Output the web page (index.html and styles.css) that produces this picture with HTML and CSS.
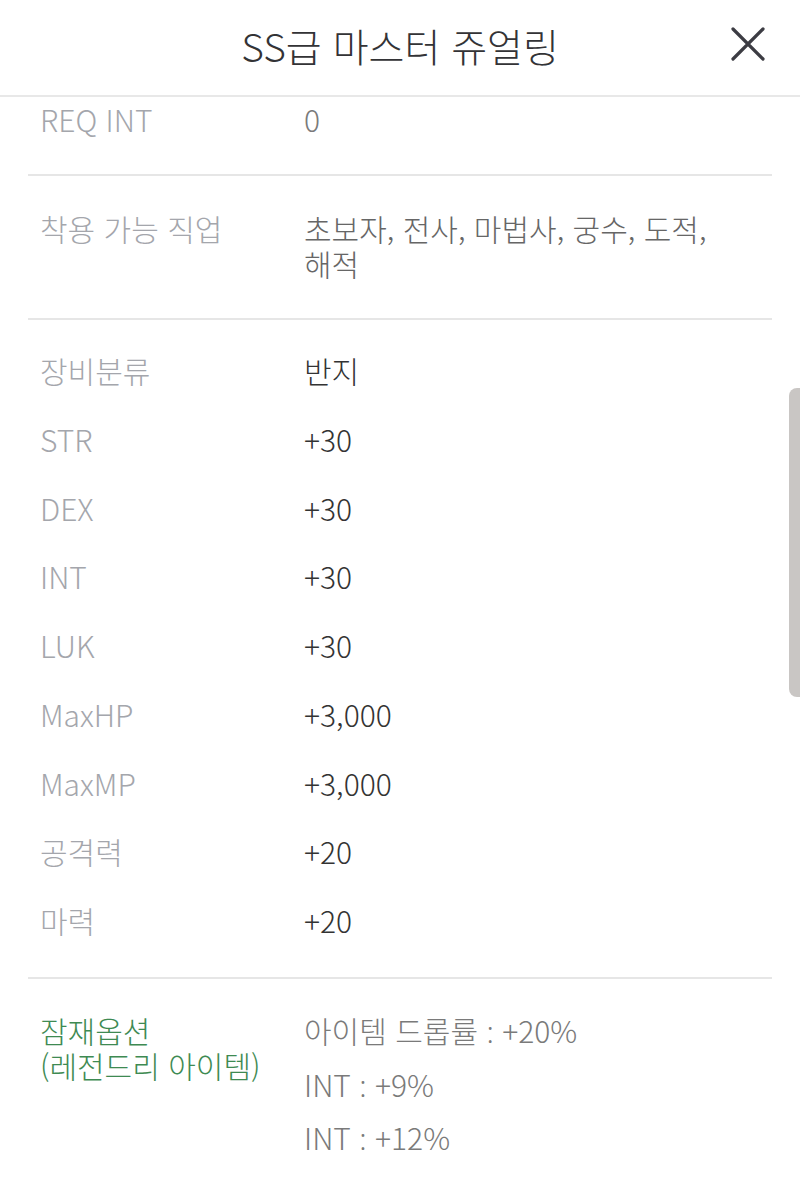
FILE: index.html
```html
<!DOCTYPE html>
<html lang="ko">
<head>
    <meta charset="UTF-8">
    <title>SS급 마스터 쥬얼링</title>
    <link rel="stylesheet" href="styles.css">
</head>
<body>

<div class="sheet">
    <div class="header">
        <div class="title">SS급 마스터 쥬얼링</div>
        <button class="close" aria-label="닫기">
            <svg width="36" height="36" viewBox="0 0 36 36">
                <path d="M3 3 L33 33 M33 3 L3 33" stroke="#3c3c43" stroke-width="3.2" stroke-linecap="round" fill="none"/>
            </svg>
        </button>
    </div>

    <div class="section first">
        <div class="row">
            <div class="label">REQ INT</div>
            <div class="value light">0</div>
        </div>
    </div>

    <div class="section jobs">
        <div class="row">
            <div class="label">착용 가능 직업</div>
            <div class="value mid">초보자, 전사, 마법사, 궁수, 도적, 해적</div>
        </div>
    </div>

    <div class="section stats">
        <div class="row"><div class="label">장비분류</div><div class="value">반지</div></div>
        <div class="row"><div class="label">STR</div><div class="value">+30</div></div>
        <div class="row"><div class="label">DEX</div><div class="value">+30</div></div>
        <div class="row"><div class="label">INT</div><div class="value">+30</div></div>
        <div class="row"><div class="label">LUK</div><div class="value">+30</div></div>
        <div class="row"><div class="label">MaxHP</div><div class="value">+3,000</div></div>
        <div class="row"><div class="label">MaxMP</div><div class="value">+3,000</div></div>
        <div class="row"><div class="label">공격력</div><div class="value">+20</div></div>
        <div class="row"><div class="label">마력</div><div class="value">+20</div></div>
    </div>

    <div class="section potential">
        <div class="row">
            <div class="label green">
                <div>잠재옵션</div>
                <div>(레전드리 아이템)</div>
            </div>
            <div class="value options">
                <div class="light">아이템 드롭률 <span class="colon">:</span> +20%</div>
                <div class="light">INT <span class="colon">:</span> +9%</div>
                <div class="light">INT <span class="colon">:</span> +12%</div>
            </div>
        </div>
    </div>

    <div class="scrollbar"></div>
</div>

</body>
</html>
```

FILE: styles.css
```css
body {
    margin: 0;
    padding: 0;
    background: #fff;
    font-family: "Noto Sans CJK KR", "Noto Sans", sans-serif;
    font-weight: 300;
}

.sheet {
    position: relative;
    width: 800px;
    height: 1184px;
    overflow: hidden;
}

.header {
    height: 95px;
    border-bottom: 2px solid #e8e8e8;
    display: flex;
    align-items: center;
    justify-content: center;
    position: relative;
}

.title {
    font-size: 39px;
    color: #333336;
    margin-top: -6px;
}

.close {
    position: absolute;
    right: 34px;
    top: 26px;
    width: 36px;
    height: 36px;
    padding: 0;
    border: none;
    background: none;
}

.section {
    margin: 0 28px;
    border-bottom: 2px solid #e6e6e6;
    display: flex;
    flex-direction: column;
}

.row {
    display: flex;
    font-size: 30px;
    line-height: 35px;
}

.label {
    width: 264px;
    padding-left: 12px;
    color: #a4a6ac;
    flex-shrink: 0;
}

.value {
    flex: 1;
    color: #333;
    word-break: keep-all;
}

.light {
    color: #7a7a7a;
}

.mid {
    color: #666;
}

.colon {
    font-family: "Noto Sans", sans-serif;
}

.first {
    padding: 5px 0 37px;
}

.jobs {
    padding: 35px 0 37px;
}

.jobs .value {
    max-width: 440px;
}

.stats {
    padding: 33px 0 39px;
    gap: 33.75px;
}

.potential {
    border-bottom: none;
    padding-top: 34px;
}

.green {
    color: #3e8a52;
}

.options {
    display: flex;
    flex-direction: column;
    gap: 17.5px;
}

.scrollbar {
    position: absolute;
    right: 0;
    top: 388px;
    width: 11px;
    height: 309px;
    background: #c9c6c4;
    border-radius: 8px 0 0 8px;
}
```
